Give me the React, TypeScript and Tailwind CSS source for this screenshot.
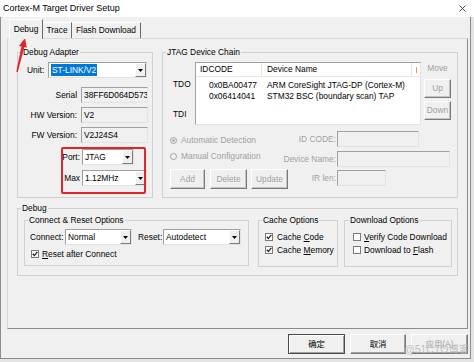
import React from 'react';

const sunken = 'border border-t-[#a0a0a0] border-l-[#a0a0a0] border-r-[#e3e3e3] border-b-[#e3e3e3]';
const raised = 'border border-t-white border-l-white border-r-[#7a7a7a] border-b-[#7a7a7a]';

function DownArrow() {
  return (
    <svg width="5" height="3" viewBox="0 0 5 3">
      <path d="M0 0h5L2.5 3z" fill="#000" />
    </svg>
  );
}

function Select({ className, value, selected }: { className: string; value: string; selected?: boolean }) {
  return (
    <div className={`flex h-[16px] items-center bg-white shrink-0 ${sunken} ${className}`}>
      <div className="flex-1 min-w-0 pl-[2px] flex items-center overflow-hidden whitespace-nowrap">
        {selected ? (
          <span className="bg-[#0078d7] text-white px-[1px] leading-[12px]">{value}</span>
        ) : (
          <span>{value}</span>
        )}
      </div>
      <div className={`w-[11px] h-full bg-[#f0f0f0] flex items-center justify-center ${raised}`}>
        <DownArrow />
      </div>
    </div>
  );
}

function Field({ className, value = '' }: { className: string; value?: string }) {
  return (
    <div className={`h-[16px] flex items-center pl-[2px] overflow-hidden whitespace-nowrap bg-[#f0f0f0] shrink-0 ${sunken} ${className}`}>
      {value}
    </div>
  );
}

function Check({ on }: { on?: boolean }) {
  return (
    <svg width="8" height="8" viewBox="0 0 8 8" className="shrink-0">
      <rect x="0.5" y="0.5" width="7" height="7" fill="#fff" stroke="#7a7a7a" />
      {on && <path d="M1.8 3.8l1.6 1.8 2.9-3.7" fill="none" stroke="#222" strokeWidth="1.3" />}
    </svg>
  );
}

function Radio({ on }: { on?: boolean }) {
  return (
    <svg width="7" height="7" viewBox="0 0 7 7" className="shrink-0">
      <circle cx="3.5" cy="3.5" r="3" fill="#f0f0f0" stroke="#a0a0a0" />
      {on && <circle cx="3.5" cy="3.5" r="1.3" fill="#a0a0a0" />}
    </svg>
  );
}

function Btn({ className, children }: { className: string; children: React.ReactNode }) {
  return (
    <div
      className={`flex items-center justify-center bg-[#f0f0f0] text-[#a0a0a0] shrink-0 shadow-[inset_-1px_-1px_0_#c4c4c4] ${raised} ${className}`}
    >
      {children}
    </div>
  );
}

function Group({
  title,
  className,
  legendClass,
  children,
}: {
  title: string;
  className: string;
  legendClass: string;
  children: React.ReactNode;
}) {
  return (
    <fieldset className={`border border-[#d0d0d0] shrink-0 min-w-0 ${className}`}>
      <legend className={`leading-[10px] px-[1px] ${legendClass}`}>{title}</legend>
      {children}
    </fieldset>
  );
}

export default function App() {
  return (
    <div className="w-[474px] h-[362px] overflow-hidden bg-[#e4e4e4] relative font-['Liberation_Sans',Arial,'Noto_Sans_CJK_SC',sans-serif] text-[8.4px] text-black">
      {/* title bar */}
      <div className="h-[17px] bg-white flex items-center justify-between pl-[3px] pr-[8px]">
        <span className="text-[9px]">Cortex-M Target Driver Setup</span>
        <svg width="7" height="7" viewBox="0 0 7 7">
          <path d="M0.5 0.5l6 6M6.5 0.5l-6 6" stroke="#333" strokeWidth="0.9" />
        </svg>
      </div>

      <div className="w-[471px] h-[342px] bg-[#f0f0f0] border-l border-r border-b border-[#8c8c8c] flex flex-col">
        {/* tabs */}
        <div className="flex items-end h-[21px] pl-[8px]">
          <div className="relative z-10 -mb-[1px] w-[34px] h-[20px] bg-[#f0f0f0] flex items-center justify-center border-l border-t border-r border-l-white border-t-white border-r-[#6a6a6a]">
            Debug
          </div>
          <div className="w-[29px] h-[16px] flex items-center justify-center border-t border-r border-t-white border-r-[#6a6a6a]">
            Trace
          </div>
          <div className="w-[69px] h-[16px] flex items-center justify-center border-t border-r border-t-white border-r-[#6a6a6a]">
            Flash Download
          </div>
        </div>

        {/* tab panel */}
        <div className="ml-[6px] w-[461px] h-[291px] border border-t-[#d9d9d9] border-l-[#d9d9d9] border-r-[#8c8c8c] border-b-[#8c8c8c] flex flex-col pl-[9px] pt-[8px]">
          <div className="flex">
            {/* Debug Adapter */}
            <Group title="Debug Adapter" className="w-[136px] h-[151px]" legendClass="ml-[4px]">
              <div className="flex flex-col">
                <div className="mt-[5px] flex items-center pl-[9px]">
                  <span className="w-[21px]">Unit:</span>
                  <Select className="w-[99px]" value="ST-LINK/V2" selected />
                </div>
                <div className="mt-[9px] flex items-center">
                  <span className="w-[59px] text-right">Serial</span>
                  <Field className="ml-[4px] w-[67px]" value="38FF6D064D5739" />
                </div>
                <div className="mt-[4px] flex items-center">
                  <span className="w-[59px] text-right">HW Version:</span>
                  <Field className="ml-[4px] w-[67px]" value="V2" />
                </div>
                <div className="mt-[4px] flex items-center">
                  <span className="w-[59px] text-right">FW Version:</span>
                  <Field className="ml-[4px] w-[67px]" value="V2J24S4" />
                </div>
                <div className="mt-[6px] flex items-center">
                  <span className="w-[62px] text-right">Port:</span>
                  <Select className="ml-[2px] w-[52px]" value="JTAG" />
                </div>
                <div className="mt-[5px] flex items-center">
                  <span className="w-[62px] text-right">Max</span>
                  <Select className="ml-[2px] w-[65px]" value="1.12MHz" />
                </div>
              </div>
            </Group>

            {/* JTAG Device Chain */}
            <Group title="JTAG Device Chain" className="ml-[9px] w-[296px] h-[151px]" legendClass="ml-[3px]">
              <div className="flex mt-[5px]">
                <div className="w-[32px] pl-[10px] flex flex-col">
                  <div className="mt-[17px] h-[10px] leading-[10px]">TDO</div>
                  <div className="mt-[20px] h-[10px] leading-[10px]">TDI</div>
                </div>
                <div className={`w-[226px] h-[63px] bg-white flex flex-col overflow-hidden ${sunken}`}>
                  <div className="flex h-[14px] border-b border-[#e5e5e5] shrink-0">
                    <div className="w-[66px] pl-[4px] border-r border-[#e5e5e5] flex items-center">IDCODE</div>
                    <div className="w-[150px] pl-[5px] border-r border-[#e5e5e5] flex items-center">Device Name</div>
                    <div className="flex-1 flex items-center pl-[4px]">
                      <span className="w-[1px] h-[6px] bg-[#e8a040]" />
                    </div>
                  </div>
                  <div className="flex flex-col pt-[3px]">
                    <div className="flex h-[11px] items-center whitespace-nowrap">
                      <span className="w-[66px] pl-[13px]">0x0BA00477</span>
                      <span className="pl-[5px]">ARM CoreSight JTAG-DP (Cortex-M)</span>
                    </div>
                    <div className="flex h-[11px] items-center whitespace-nowrap">
                      <span className="w-[66px] pl-[13px]">0x06414041</span>
                      <span className="pl-[5px]">STM32 BSC (boundary scan) TAP</span>
                    </div>
                  </div>
                </div>
                <div className="ml-[3px] w-[27px] flex flex-col items-center">
                  <div className="h-[12px] flex items-center text-[#a0a0a0]">Move</div>
                  <Btn className="mt-[5px] w-[27px] h-[19px]">Up</Btn>
                  <Btn className="mt-[3px] w-[27px] h-[19px]">Down</Btn>
                </div>
              </div>

              <div className="flex">
                <div className="w-[125px] pl-[7px] flex flex-col text-[#a0a0a0]">
                  <div className="mt-[9px] h-[12px] flex items-center gap-[4px] whitespace-nowrap">
                    <Radio on />
                    Automatic Detection
                  </div>
                  <div className="mt-[4px] h-[12px] flex items-center gap-[4px] whitespace-nowrap">
                    <Radio />
                    Manual Configuration
                  </div>
                  <div className="mt-[7px] flex">
                    <Btn className="w-[35px] h-[20px]">Add</Btn>
                    <Btn className="ml-[5px] w-[37px] h-[20px]">Delete</Btn>
                    <Btn className="ml-[4px] w-[37px] h-[20px]">Update</Btn>
                  </div>
                </div>
                <div className="flex flex-col text-[#a0a0a0]">
                  <div className="mt-[6px] flex items-center">
                    <div className="w-[48px] flex justify-end whitespace-nowrap">ID CODE:</div>
                    <Field className="ml-[1px] w-[82px]" />
                  </div>
                  <div className="mt-[4px] flex items-center">
                    <div className="w-[48px] flex justify-end whitespace-nowrap">Device Name:</div>
                    <Field className="ml-[1px] w-[113px]" />
                  </div>
                  <div className="mt-[3px] flex items-center">
                    <div className="w-[48px] flex justify-end whitespace-nowrap">IR len:</div>
                    <Field className="ml-[1px] w-[49px]" />
                  </div>
                </div>
              </div>
            </Group>
          </div>

          {/* Debug */}
          <Group title="Debug" className="mt-[5px] w-[441px] h-[73px]" legendClass="ml-[3px]">
            <div className="flex pl-[6px] mt-[2px]">
              <Group title="Connect & Reset Options" className="w-[225px] h-[51px]" legendClass="ml-[3px]">
                <div className="mt-[4px] flex items-center pl-[5px]">
                  <span className="w-[35px]">Connect:</span>
                  <Select className="w-[67px]" value="Normal" />
                  <span className="ml-[6px] w-[25px]">Reset:</span>
                  <Select className="w-[78px]" value="Autodetect" />
                </div>
                <div className="mt-[4px] h-[10px] flex items-center pl-[6px] gap-[3px]">
                  <Check on />
                  <span>
                    <u>R</u>eset after Connect
                  </span>
                </div>
              </Group>
              <Group title="Cache Options" className="ml-[9px] w-[80px] h-[52px]" legendClass="ml-[3px]">
                <div className="mt-[7px] h-[10px] flex items-center pl-[6px] gap-[4px] whitespace-nowrap">
                  <Check on />
                  <span>
                    Cache <u>C</u>ode
                  </span>
                </div>
                <div className="mt-[3px] h-[10px] flex items-center pl-[6px] gap-[4px] whitespace-nowrap">
                  <Check on />
                  <span>
                    Cache <u>M</u>emory
                  </span>
                </div>
              </Group>
              <Group title="Download Options" className="ml-[6px] w-[108px] h-[52px]" legendClass="ml-[4px]">
                <div className="overflow-hidden">
                  <div className="mt-[7px] h-[10px] flex items-center pl-[8px] gap-[3px] whitespace-nowrap">
                    <Check />
                    <span>
                      <u>V</u>erify Code Download
                    </span>
                  </div>
                  <div className="mt-[3px] h-[10px] flex items-center pl-[8px] gap-[3px] whitespace-nowrap">
                    <Check />
                    <span>
                      Download to <u>F</u>lash
                    </span>
                  </div>
                </div>
              </Group>
            </div>
          </Group>
        </div>

        {/* dialog buttons */}
        <div className="mt-[5px] flex justify-end pr-[2px] gap-[5px]">
          <div className="w-[57px] h-[20px] flex items-center justify-center bg-[#f0f0f0] border border-[#4a4a4a] shadow-[inset_1px_1px_0_#fff,inset_-1px_-1px_0_#a0a0a0]">
            确定
          </div>
          <div className={`w-[56px] h-[20px] flex items-center justify-center bg-[#f0f0f0] shadow-[inset_-1px_-1px_0_#a0a0a0] ${raised}`}>
            取消
          </div>
          <div className={`w-[57px] h-[20px] flex items-center justify-center bg-[#f0f0f0] text-[#a0a0a0] shadow-[inset_-1px_-1px_0_#a0a0a0] ${raised}`}>
            应用(A)
          </div>
        </div>
      </div>

      {/* annotations */}
      <div className="absolute left-[61px] top-[147px] w-[85px] h-[47px] border-2 border-[#e3242b] rounded-[2px]" />
      <svg className="absolute left-[14px] top-[36px]" width="16" height="40" viewBox="0 0 16 40">
        <path d="M11 2L5 9.9L7.4 10.5L2.3 35.8L3.7 36.2L10.4 11.1L12.8 11.7Z" fill="#e3242b" />
      </svg>
      <div className="absolute left-[404px] top-[343px] text-[10.5px] leading-[12px] text-[#b4b4b4]/80">@51CTO博客</div>
    </div>
  );
}
